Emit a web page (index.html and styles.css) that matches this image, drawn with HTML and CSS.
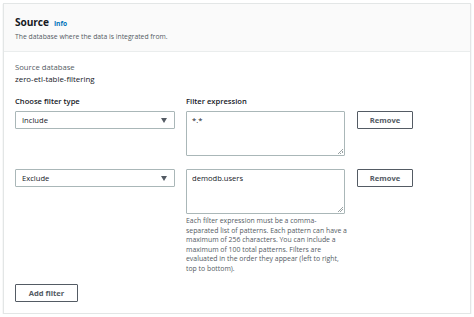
FILE: index.html
```html
<!DOCTYPE html>
<html>
<head>
<meta charset="utf-8">
<link rel="stylesheet" href="styles.css">
</head>
<body>
<div class="card">
  <div class="card-header">
    <div class="title-row"><h2 class="title">Source</h2><span class="info">Info</span></div>
    <p class="desc">The database where the data is integrated from.</p>
  </div>
  <div class="card-body">
    <div class="kv">
      <div class="kv-label">Source database</div>
      <div class="kv-value">zero-etl-table-filtering</div>
    </div>
    <div class="filters">
      <div class="lbl">Choose filter type</div>
      <div class="lbl">Filter expression</div>
      <div class="spacer"></div>

      <div class="select"><span>Include</span><span class="caret"></span></div>
      <div class="textarea"><span>*.*</span><span class="grip"></span></div>
      <div><button class="btn">Remove</button></div>

      <div class="select row2"><span>Exclude</span><span class="caret"></span></div>
      <div class="row2">
        <div class="textarea"><span>demodb.users</span><span class="grip"></span></div>
        <p class="help">Each filter expression must be a comma-separated list of patterns. Each pattern can have a maximum of 256 characters. You can include a maximum of 100 total patterns. Filters are evaluated in the order they appear (left to right, top to bottom).</p>
      </div>
      <div class="row2"><button class="btn">Remove</button></div>
    </div>
    <button class="btn add">Add filter</button>
  </div>
</div>
</body>
</html>
```
FILE: styles.css
```css
* { box-sizing: border-box; }
html, body { margin: 0; padding: 0; background: #fff; }
body {
  font-family: "Open Sans", "Noto Sans", sans-serif;
  color: #16191f;
  padding: 3px 3px 0 3px;
}
.card {
  width: 468px;
  height: 311px;
  border: 1px solid #e3e6e6;
  box-shadow: 0 1px 1px 0 rgba(0,28,36,0.2);
  background: #fff;
  display: flex;
  flex-direction: column;
}
.card-header {
  background: #fafafa;
  border-bottom: 1px solid #eaeded;
  padding: 10px 11px 0 11px;
  height: 48px;
}
.title-row { display: flex; align-items: baseline; gap: 5px; height: 16px; }
.title { margin: 0; font-size: 10.2px; font-weight: 700; line-height: 16px; letter-spacing: -0.1px; }
.info { font-size: 6.6px; font-weight: 700; color: #0073bb; }
.desc { margin: 2px 0 0 0; font-size: 6.8px; line-height: 10px; color: #545b64; }
.card-body { padding: 9px 11px 0 11px; display: flex; flex-direction: column; }
.kv-label { font-size: 7.7px; line-height: 12px; color: #545b64; }
.kv-value { font-size: 7.9px; line-height: 13px; color: #16191f; }
.filters {
  margin-top: 9px;
  display: grid;
  grid-template-columns: 160px 159px 56px;
  column-gap: 11px;
}
.lbl { font-size: 7.6px; line-height: 12px; font-weight: 600; height: 16px; }
.spacer { height: 16px; }
.select {
  height: 18px;
  border: 1px solid #aab7b8;
  border-radius: 1px;
  display: flex;
  align-items: center;
  justify-content: space-between;
  padding: 0 7px 0 6px;
  font-size: 7.6px;
}
.caret {
  width: 0; height: 0;
  border-left: 3.5px solid transparent;
  border-right: 3.5px solid transparent;
  border-top: 5px solid #545b64;
}
.textarea {
  position: relative;
  height: 45px;
  border: 1px solid #aab7b8;
  border-radius: 1px;
  padding: 2px 5px;
  font-size: 7.6px;
  line-height: 12px;
}
.grip {
  position: absolute;
  right: 1px; bottom: 1px;
  width: 5px; height: 5px;
  background: linear-gradient(135deg, transparent 0 45%, #9aa3a4 45% 55%, transparent 55% 70%, #9aa3a4 70% 80%, transparent 80%);
}
.row2 { margin-top: 13px; }
.btn {
  display: block;
  width: 56px;
  height: 18px;
  margin-left: 1px;
  border: 1px solid #545b64;
  border-radius: 1px;
  background: #fff;
  color: #545b64;
  font-family: inherit;
  font-size: 7.6px;
  font-weight: 700;
  padding: 0;
  cursor: pointer;
}
.help {
  margin: 2px 0 0 0;
  font-size: 6.9px;
  line-height: 9.6px;
  color: #545b64;
  width: 161px;
}
.add { margin-top: 10px; width: 63px; margin-left: 0; }
```
